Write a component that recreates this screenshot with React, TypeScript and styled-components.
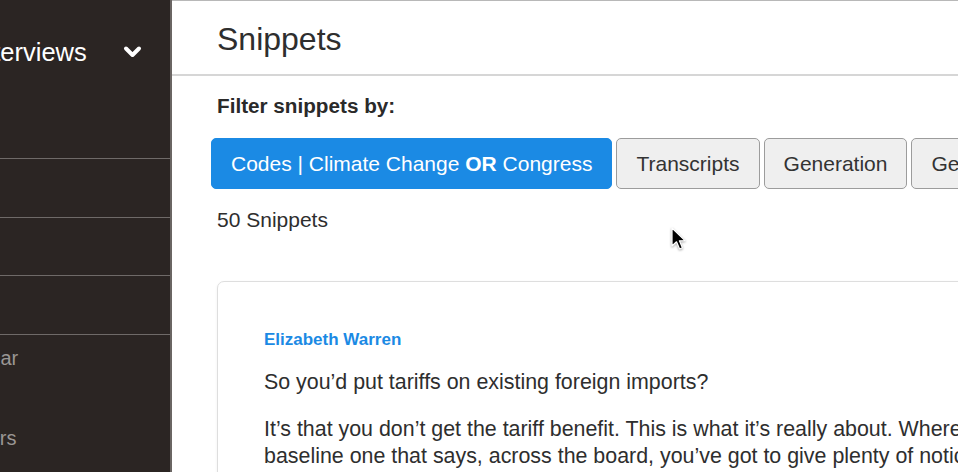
import styled, { createGlobalStyle } from "styled-components";

const GlobalStyle = createGlobalStyle`
  html, body {
    margin: 0;
    padding: 0;
    overflow: hidden;
    background: #ffffff;
    font-family: "Liberation Sans", Arial, sans-serif;
  }
`;

const Layout = styled.div`
  display: flex;
  width: 958px;
  height: 472px;
  overflow: hidden;
  position: relative;
`;

const Sidebar = styled.nav`
  width: 170px;
  flex-shrink: 0;
  background: #2b2523;
  border-right: 2px solid #6a6563;
  overflow: hidden;
  display: flex;
  flex-direction: column;
`;

const NavHeader = styled.div`
  height: 158px;
  padding: 37px 28px 0 0;
  box-sizing: border-box;
`;

const NavTop = styled.div`
  display: flex;
  align-items: center;
  justify-content: space-between;
  height: 30px;
  color: #ffffff;
  font-size: 25.5px;
`;

const NavLabel = styled.span<{ $clip: number }>`
  margin-left: -${(p) => p.$clip}px;
  white-space: nowrap;
`;

const NavRow = styled.div`
  height: 57.7px;
  border-top: 1px solid #6f6a68;
`;

const NavSub = styled.div`
  border-top: 1px solid #6f6a68;
  padding-top: 12px;
  display: flex;
  flex-direction: column;
  gap: 57px;
  color: #9a9694;
  font-size: 20px;
  line-height: 23px;
`;

const Main = styled.main`
  flex: 1;
  min-width: 0;
  border-top: 1px solid #b8b8b8;
  display: flex;
  flex-direction: column;
  overflow: hidden;
`;

const Header = styled.header`
  height: 75px;
  flex-shrink: 0;
  display: flex;
  align-items: center;
  padding: 3px 0 0 45px;
  border-bottom: 2px solid #d6d6d6;
  box-sizing: border-box;
`;

const Title = styled.h1`
  margin: 0;
  font-size: 32px;
  font-weight: 400;
  color: #2e2e2e;
`;

const Content = styled.section`
  padding: 18px 0 0 39px;
  display: flex;
  flex-direction: column;
  align-items: flex-start;
`;

const FilterLabel = styled.div`
  padding-left: 6px;
  font-size: 20.7px;
  font-weight: 700;
  color: #2a2a2a;
  line-height: 24px;
`;

const Filters = styled.div`
  display: flex;
  gap: 4px;
  margin-top: 20px;
  white-space: nowrap;
`;

const FilterButton = styled.button<{ $active?: boolean }>`
  height: 51px;
  padding: 0 19px;
  border-radius: 5px;
  font-family: inherit;
  font-size: 21px;
  border: 1px solid ${(p) => (p.$active ? "#1b8ae4" : "#9c9c9c")};
  background: ${(p) => (p.$active ? "#1b8ae4" : "#efefef")};
  color: ${(p) => (p.$active ? "#ffffff" : "#333333")};
  flex-shrink: 0;
  b {
    font-weight: 700;
  }
`;

const Count = styled.div`
  padding-left: 6px;
  margin-top: 19px;
  font-size: 21px;
  color: #2e2e2e;
  line-height: 24px;
`;

const Card = styled.article`
  margin: 49px 0 0 6px;
  width: 900px;
  min-height: 320px;
  flex-shrink: 0;
  border: 1px solid #dedede;
  border-radius: 7px;
  box-shadow: 0 1px 3px rgba(0, 0, 0, 0.06);
  padding: 48px 0 0 46px;
  box-sizing: border-box;
`;

const Speaker = styled.div`
  font-size: 17px;
  font-weight: 700;
  color: #1b8ae4;
  line-height: 20px;
`;

const Para = styled.p<{ $gap: number }>`
  margin: ${(p) => p.$gap}px 0 0;
  font-size: 21.4px;
  line-height: 27px;
  color: #2e2e2e;
  white-space: nowrap;
`;

const Cursor = styled.svg`
  position: absolute;
  left: 671px;
  top: 227px;
  filter: drop-shadow(0 1px 1px rgba(0, 0, 0, 0.35));
`;

export default function App() {
  return (
    <Layout>
      <GlobalStyle />
      <Sidebar>
        <NavHeader>
          <NavTop>
            <NavLabel $clip={28}>Interviews</NavLabel>
            <svg width="19" height="14" viewBox="0 0 19 14">
              <polyline
                points="3,3.5 9.5,10 16,3.5"
                fill="none"
                stroke="#ffffff"
                strokeWidth="4"
                strokeLinecap="round"
                strokeLinejoin="round"
              />
            </svg>
          </NavTop>
        </NavHeader>
        <NavRow />
        <NavRow />
        <NavRow />
        <NavSub>
          <NavLabel $clip={63}>Calendar</NavLabel>
          <NavLabel $clip={68}>Speakers</NavLabel>
        </NavSub>
      </Sidebar>
      <Main>
        <Header>
          <Title>Snippets</Title>
        </Header>
        <Content>
          <FilterLabel>Filter snippets by:</FilterLabel>
          <Filters>
            <FilterButton $active>
              Codes | Climate Change <b>OR</b> Congress
            </FilterButton>
            <FilterButton>Transcripts</FilterButton>
            <FilterButton>Generation</FilterButton>
            <FilterButton>Gender</FilterButton>
          </Filters>
          <Count>50 Snippets</Count>
          <Card>
            <Speaker>Elizabeth Warren</Speaker>
            <Para $gap={19}>So you’d put tariffs on existing foreign imports?</Para>
            <Para $gap={20}>
              It’s that you don’t get the tariff benefit. This is what it’s really about. Where you
              have a
              <br />
              baseline one that says, across the board, you’ve got to give plenty of notice before
            </Para>
          </Card>
        </Content>
      </Main>
      <Cursor width="16" height="26" viewBox="0 0 16 26">
        <path
          d="M1 1 L1 19 L5.5 14.8 L8.6 22 L11.4 20.8 L8.4 13.8 L14 13.6 Z"
          fill="#000000"
          stroke="#ffffff"
          strokeWidth="1.2"
          strokeLinejoin="round"
        />
      </Cursor>
    </Layout>
  );
}
